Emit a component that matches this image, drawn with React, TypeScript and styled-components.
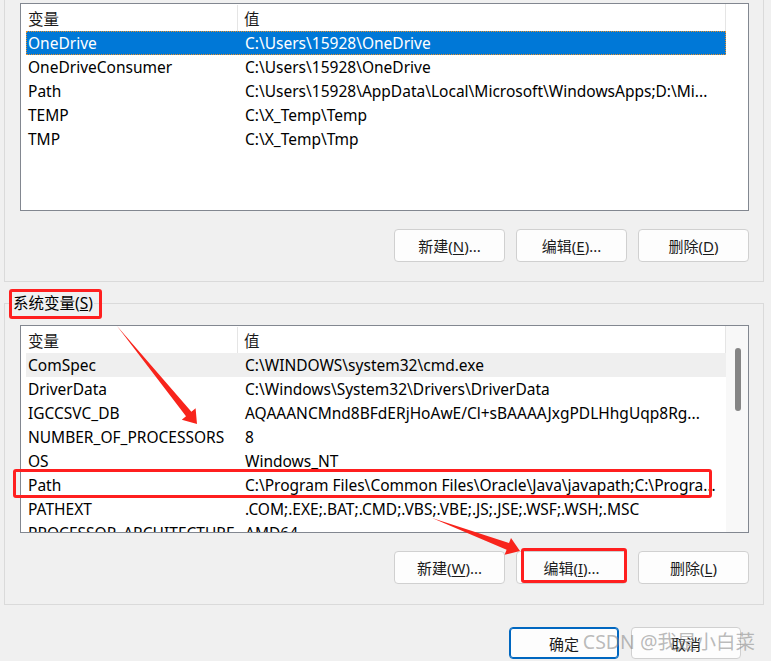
import styled, { createGlobalStyle } from 'styled-components'

// ─── Data ─────────────────────────────────────────────────────────────────────

interface EnvVar {
  name: string
  value: string
}

const userVars: EnvVar[] = [
  { name: 'OneDrive', value: 'C:\\Users\\15928\\OneDrive' },
  { name: 'OneDriveConsumer', value: 'C:\\Users\\15928\\OneDrive' },
  { name: 'Path', value: 'C:\\Users\\15928\\AppData\\Local\\Microsoft\\WindowsApps;D:\\Mi...' },
  { name: 'TEMP', value: 'C:\\X_Temp\\Temp' },
  { name: 'TMP', value: 'C:\\X_Temp\\Tmp' },
]

const systemVars: EnvVar[] = [
  { name: 'ComSpec', value: 'C:\\WINDOWS\\system32\\cmd.exe' },
  { name: 'DriverData', value: 'C:\\Windows\\System32\\Drivers\\DriverData' },
  { name: 'IGCCSVC_DB', value: 'AQAAANCMnd8BFdERjHoAwE/Cl+sBAAAAJxgPDLHhgUqp8Rg...' },
  { name: 'NUMBER_OF_PROCESSORS', value: '8' },
  { name: 'OS', value: 'Windows_NT' },
  { name: 'Path', value: 'C:\\Program Files\\Common Files\\Oracle\\Java\\javapath;C:\\Progra...' },
  { name: 'PATHEXT', value: '.COM;.EXE;.BAT;.CMD;.VBS;.VBE;.JS;.JSE;.WSF;.WSH;.MSC' },
  { name: 'PROCESSOR_ARCHITECTURE', value: 'AMD64' },
]

type RowState = 'none' | 'selected' | 'hover'

// ─── Pieces ───────────────────────────────────────────────────────────────────

function VarList({
  rows,
  active,
  state,
  scroll,
}: {
  rows: EnvVar[]
  active: number
  state: RowState
  scroll?: boolean
}) {
  return (
    <ListBox>
      <ListContent>
        <HeaderRow>
          <HeaderCell>变量</HeaderCell>
          <HeaderCell $last>值</HeaderCell>
        </HeaderRow>
        {rows.map((r, i) => (
          <Row key={r.name} $state={i === active ? state : 'none'}>
            <NameCell>{r.name}</NameCell>
            <ValueCell>{r.value}</ValueCell>
          </Row>
        ))}
      </ListContent>
      <ScrollCol $visible={!!scroll}>{scroll && <ScrollThumb />}</ScrollCol>
    </ListBox>
  )
}

function ButtonRow({ keys }: { keys: [string, string, string] }) {
  return (
    <Buttons>
      <DlgButton>
        新建(<u>{keys[0]}</u>)...
      </DlgButton>
      <DlgButton>
        编辑(<u>{keys[1]}</u>)...
      </DlgButton>
      <DlgButton>
        删除(<u>{keys[2]}</u>)
      </DlgButton>
    </Buttons>
  )
}

// ─── Component ────────────────────────────────────────────────────────────────

export default function App() {
  return (
    <>
      <GlobalStyle />
      <Page>
        <TopGroup>
          <VarList rows={userVars} active={0} state="selected" />
          <ButtonRow keys={['N', 'E', 'D']} />
        </TopGroup>

        <SysGroup>
          <Legend>
            系统变量(<u>S</u>)
          </Legend>
          <VarList rows={systemVars} active={0} state="hover" scroll />
          <ButtonRow keys={['W', 'I', 'L']} />
        </SysGroup>

        <Footer>
          <DlgButton $primary $narrow>
            确定
          </DlgButton>
          <DlgButton $narrow>取消</DlgButton>
        </Footer>

        <RedBox $x={9} $y={289} $w={93} $h={30} />
        <RedBox $x={13} $y={469} $w={699} $h={29} />
        <RedBox $x={521} $y={548} $w={106} $h={35} />

        <Arrows viewBox="0 0 771 661">
          <polygon points="117,326 191.4,411.8 195.6,408.3 197,424 181.8,419.7 186,416.2" />
          <polygon points="432,518 509,543.1 511,538 520,551 504.6,554.8 506.6,549.7" />
        </Arrows>

        <Watermark>CSDN @我是小白菜</Watermark>
      </Page>
    </>
  )
}

// ─── Styles ───────────────────────────────────────────────────────────────────

const GlobalStyle = createGlobalStyle`
  html, body {
    margin: 0;
    padding: 0;
    background: #f0f0f0;
  }
  body {
    font-family: 'Noto Sans', 'Noto Sans CJK SC', sans-serif;
    font-size: 15.5px;
    color: #000;
  }
  * {
    box-sizing: border-box;
  }
`

const Page = styled.div`
  position: relative;
  width: 771px;
  height: 661px;
  overflow: hidden;
  background: #f0f0f0;
`

const TopGroup = styled.section`
  margin-left: 4px;
  width: 760px;
  border: 1px solid #dadada;
  border-top: none;
  padding: 3px 14px 19px 15px;
`

const SysGroup = styled.section`
  position: relative;
  margin: 21px 0 0 4px;
  width: 760px;
  border: 1px solid #dadada;
  padding: 21px 14px 20px 15px;
`

const Legend = styled.div`
  position: absolute;
  top: -11px;
  left: 7px;
  padding: 0 1px;
  background: #f0f0f0;
  line-height: 20px;
  color: #000;
`

const ListBox = styled.div`
  display: flex;
  width: 729px;
  height: 208px;
  border: 1px solid #828790;
  background: #fff;
  overflow: hidden;
`

const ListContent = styled.div`
  flex: 1;
  padding-left: 5px;
  overflow: hidden;
`

const ScrollCol = styled.div<{ $visible: boolean }>`
  position: relative;
  width: 22px;
  flex-shrink: 0;
  background: ${({ $visible }) => ($visible ? '#f8f8f8' : '#fff')};
`

const ScrollThumb = styled.div`
  position: absolute;
  top: 22px;
  left: 9px;
  width: 6px;
  height: 63px;
  border-radius: 3px;
  background: #858585;
`

const HeaderRow = styled.div`
  display: grid;
  grid-template-columns: 212px 1fr;
  height: 27px;
  padding-top: 1px;
  border-right: 1px solid #e5e5e5;
`

const HeaderCell = styled.div<{ $last?: boolean }>`
  padding: 2px 0 0 ${({ $last }) => ($last ? '6px' : '2px')};
  line-height: 24px;
  color: #1a1a1a;
  border-right: ${({ $last }) => ($last ? 'none' : '1px solid #e5e5e5')};
`

const Row = styled.div<{ $state: RowState }>`
  display: grid;
  grid-template-columns: 212px 1fr;
  height: 24px;
  line-height: 22px;
  white-space: nowrap;
  border: 1px ${({ $state }) => ($state === 'selected' ? 'dotted #e8902a' : 'solid transparent')};
  background: ${({ $state }) =>
    $state === 'selected' ? '#0078d7' : $state === 'hover' ? '#efefef' : 'transparent'};
  color: ${({ $state }) => ($state === 'selected' ? '#fff' : '#000')};
`

const NameCell = styled.span`
  padding-left: 1px;
  overflow: hidden;
`

const ValueCell = styled.span`
  padding-left: 6px;
  overflow: hidden;
`

const Buttons = styled.div`
  display: flex;
  justify-content: flex-end;
  gap: 11px;
  margin-top: 18px;
`

const DlgButton = styled.button<{ $primary?: boolean; $narrow?: boolean }>`
  width: ${({ $narrow }) => ($narrow ? '110px' : '111px')};
  height: ${({ $narrow }) => ($narrow ? '32px' : '33px')};
  padding: 0;
  border-radius: 4px;
  border: 1px solid ${({ $primary }) => ($primary ? '#0067c0' : '#d0d0d0')};
  box-shadow: ${({ $primary }) => ($primary ? 'inset 0 0 0 1px #0067c0' : 'none')};
  background: #fdfdfd;
  font-family: inherit;
  font-size: 15px;
  color: #1b1b1b;

  u {
    text-underline-offset: 2px;
  }
`

const Footer = styled.div`
  display: flex;
  justify-content: flex-end;
  gap: 12px;
  margin-top: 22px;
  padding-right: 30px;
`

const RedBox = styled.div<{ $x: number; $y: number; $w: number; $h: number }>`
  position: absolute;
  left: ${({ $x }) => $x}px;
  top: ${({ $y }) => $y}px;
  width: ${({ $w }) => $w}px;
  height: ${({ $h }) => $h}px;
  border: 3px solid #ff1f1f;
  border-radius: 3px;
  pointer-events: none;
`

const Arrows = styled.svg`
  position: absolute;
  left: 0;
  top: 0;
  width: 771px;
  height: 661px;
  pointer-events: none;

  polygon {
    fill: #f8241c;
  }
`

const Watermark = styled.div`
  position: absolute;
  right: 16px;
  bottom: 5px;
  font-size: 19.5px;
  line-height: 28px;
  color: rgba(130, 130, 130, 0.55);
  pointer-events: none;
  white-space: nowrap;
`
